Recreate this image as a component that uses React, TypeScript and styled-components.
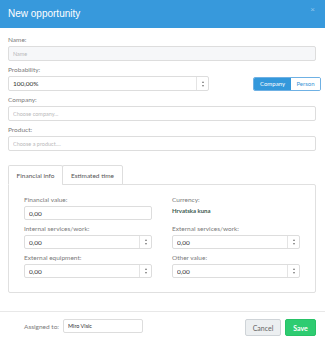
import React from "react";
import styled, { createGlobalStyle } from "styled-components";

const Global = createGlobalStyle`
  html, body { margin: 0; padding: 0; background: #fff; }
  body { font-family: Lato, "Open Sans", sans-serif; }
  * { box-sizing: border-box; }
`;

const Modal = styled.div`
  width: 325px;
  height: 343px;
  background: #fff;
  overflow: hidden;
  display: flex;
  flex-direction: column;
`;

const Header = styled.header`
  height: 28px;
  flex: none;
  background: #3799dc;
  display: flex;
  align-items: center;
  justify-content: space-between;
  padding: 0 10px 0 8px;
`;

const Title = styled.h1`
  margin: 0;
  font-family: "Liberation Sans", Arial, sans-serif;
  font-weight: normal;
  font-size: 10px;
  line-height: 1;
  color: #fff;
`;

const Close = styled.span`
  align-self: flex-start;
  margin-top: 6px;
  font-family: "Liberation Sans", Arial, sans-serif;
  font-size: 8px;
  line-height: 8px;
  color: rgba(255, 255, 255, 0.45);
`;

const Body = styled.div`
  padding: 7px 9px 0 8px;
  display: flex;
  flex-direction: column;
  gap: 4px;
`;

const Field = styled.div`
  display: flex;
  flex-direction: column;
`;

const Label = styled.label<{ $compact?: boolean }>`
  display: block;
  font-size: 6.5px;
  line-height: ${(p) => (p.$compact ? "9px" : "10px")};
  margin-bottom: ${(p) => (p.$compact ? "2px" : "1px")};
  color: #7a7a7a;
`;

const TextInput = styled.input<{ $muted?: boolean; $h?: number; $small?: boolean }>`
  display: block;
  width: 100%;
  height: ${(p) => p.$h ?? 15}px;
  margin: 0;
  border: 1px solid #dddddd;
  border-radius: 2px;
  padding: 0 4px;
  font-family: Lato, "Open Sans", sans-serif;
  font-size: ${(p) => (p.$small ? "5.5px" : "6.5px")};
  color: #333;
  background: ${(p) => (p.$muted ? "#f6f7f9" : "#fff")};
  outline: none;
  &::placeholder {
    color: #b9b9b9;
  }
`;

const NumberBox = styled.div<{ $width?: string; $h: number }>`
  display: flex;
  width: ${(p) => p.$width ?? "100%"};
  height: ${(p) => p.$h}px;
  border: 1px solid #dddddd;
  border-radius: 2px;
  background: #fff;
  overflow: hidden;
`;

const BareInput = styled.input`
  flex: 1;
  min-width: 0;
  margin: 0;
  border: 0;
  padding: 0 4px;
  font-family: Lato, "Open Sans", sans-serif;
  font-size: 6.5px;
  color: #333;
  background: transparent;
  outline: none;
`;

const Spinner = styled.div`
  width: 12px;
  flex: none;
  border-left: 1px solid #e4e4e4;
  display: flex;
  flex-direction: column;
  align-items: center;
  justify-content: center;
  gap: 2px;
`;

const Arrow = styled.span<{ $down?: boolean }>`
  width: 0;
  height: 0;
  border-left: 1.5px solid transparent;
  border-right: 1.5px solid transparent;
  ${(p) =>
    p.$down ? "border-top: 2px solid #777;" : "border-bottom: 2px solid #777;"}
`;

const InlineRow = styled.div`
  display: flex;
  align-items: center;
  justify-content: space-between;
`;

const Toggle = styled.div`
  display: flex;
  height: 14px;
  margin-right: -5px;
  border: 1px solid #6fb1e4;
  border-radius: 2px;
  overflow: hidden;
`;

const ToggleButton = styled.button<{ $active?: boolean; $w: number }>`
  width: ${(p) => p.$w}px;
  height: 100%;
  margin: 0;
  padding: 0;
  border: 0;
  font-family: Lato, "Open Sans", sans-serif;
  font-size: 6px;
  background: ${(p) => (p.$active ? "#3498db" : "#fff")};
  color: ${(p) => (p.$active ? "#fff" : "#3a94d6")};
`;

const Tabs = styled.div`
  margin-top: 10px;
  display: flex;
  flex-direction: column;
`;

const TabBar = styled.div`
  display: flex;
  align-items: flex-start;
  height: 19px;
  position: relative;
  z-index: 1;
`;

const Tab = styled.button<{ $active?: boolean; $w: number }>`
  width: ${(p) => p.$w}px;
  height: 20px;
  margin: 0 0 -1px 0;
  padding: 0;
  border: 1px solid #dedede;
  border-bottom-color: ${(p) => (p.$active ? "#fff" : "#dedede")};
  border-radius: 2px 2px 0 0;
  background: #fff;
  font-family: Lato, "Open Sans", sans-serif;
  font-size: 6.5px;
  color: #555;
  & + & {
    margin-left: -1px;
  }
`;

const Panel = styled.div`
  border: 1px solid #e0e0e0;
  border-radius: 0 2px 2px 2px;
  padding: 10px 15px 14px 15px;
  display: grid;
  grid-template-columns: 128px 128px;
  column-gap: 20px;
  row-gap: 4px;
`;

const CurrencyValue = styled.div`
  font-size: 6px;
  line-height: 10px;
  font-weight: 700;
  color: #3d5b50;
`;

const Footer = styled.footer`
  margin-top: 18px;
  border-top: 1px solid #e8e8e8;
  padding: 7px 9px 0 24px;
  display: flex;
  align-items: flex-start;
`;

const AssignLabel = styled.span`
  width: 39px;
  font-size: 6.5px;
  line-height: 14px;
  margin-top: 1px;
  color: #7a7a7a;
`;

const AssignBox = styled.div`
  width: 80px;
`;

const Actions = styled.div`
  margin-left: auto;
  display: flex;
  gap: 4px;
`;

const Button = styled.button<{ $primary?: boolean; $w: number }>`
  width: ${(p) => p.$w}px;
  height: 17px;
  margin: 0;
  padding: 0;
  border-radius: 2px;
  border: 1px solid ${(p) => (p.$primary ? "#27c267" : "#cfd4d8")};
  background: ${(p) => (p.$primary ? "#2ecc71" : "#eceff1")};
  color: ${(p) => (p.$primary ? "#fff" : "#666")};
  font-family: Lato, "Open Sans", sans-serif;
  font-size: 7px;
  font-weight: ${(p) => (p.$primary ? 700 : 400)};
`;

const Spin = () => (
  <Spinner>
    <Arrow />
    <Arrow $down />
  </Spinner>
);

const NumberField = ({ label, value }: { label: string; value: string }) => (
  <Field>
    <Label $compact>{label}</Label>
    <NumberBox $h={14}>
      <BareInput readOnly value={value} />
      <Spin />
    </NumberBox>
  </Field>
);

export default function App() {
  return (
    <Modal>
      <Global />
      <Header>
        <Title>New opportunity</Title>
        <Close>×</Close>
      </Header>
      <Body>
        <Field>
          <Label>Name:</Label>
          <TextInput $muted $small placeholder="Name" />
        </Field>
        <Field>
          <Label>Probability:</Label>
          <InlineRow>
            <NumberBox $width="201px" $h={15}>
              <BareInput readOnly value="100,00%" />
              <Spin />
            </NumberBox>
            <Toggle>
              <ToggleButton $active $w={37}>
                Company
              </ToggleButton>
              <ToggleButton $w={29}>Person</ToggleButton>
            </Toggle>
          </InlineRow>
        </Field>
        <Field>
          <Label>Company:</Label>
          <TextInput $small placeholder="Choose company..." />
        </Field>
        <Field>
          <Label>Product:</Label>
          <TextInput $small placeholder="Choose a product...." />
        </Field>
        <Tabs>
          <TabBar>
            <Tab $active $w={55}>
              Financial info
            </Tab>
            <Tab $w={61}>Estimated time</Tab>
          </TabBar>
          <Panel>
            <Field>
              <Label $compact>Financial value:</Label>
              <TextInput $h={14} readOnly value="0,00" />
            </Field>
            <Field>
              <Label $compact>Currency:</Label>
              <CurrencyValue>Hrvatska kuna</CurrencyValue>
            </Field>
            <NumberField label="Internal services/work:" value="0,00" />
            <NumberField label="External services/work:" value="0,00" />
            <NumberField label="External equipment:" value="0,00" />
            <NumberField label="Other value:" value="0,00" />
          </Panel>
        </Tabs>
      </Body>
      <Footer>
        <AssignLabel>Assigned to:</AssignLabel>
        <AssignBox>
          <TextInput $h={14} $small readOnly value="Miro Visic" />
        </AssignBox>
        <Actions>
          <Button $w={36}>Cancel</Button>
          <Button $primary $w={31}>
            Save
          </Button>
        </Actions>
      </Footer>
    </Modal>
  );
}
